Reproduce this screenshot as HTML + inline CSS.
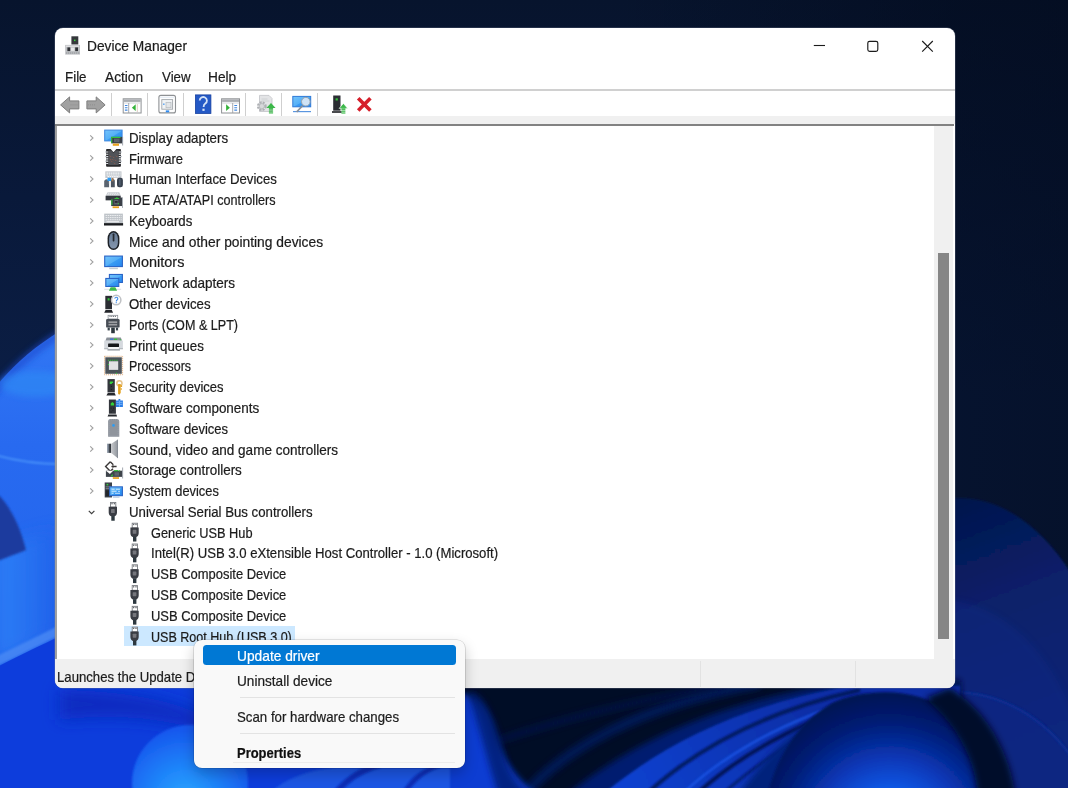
<!DOCTYPE html>
<html><head><meta charset="utf-8"><title>Device Manager</title>
<style>
html,body{margin:0;padding:0}
body{width:1068px;height:788px;overflow:hidden;position:relative;background:#06132c;font-family:"Liberation Sans",sans-serif;}
.abs,.t,.tb,svg.i{position:absolute}
.t,.tb{white-space:pre;font-size:14.5px;line-height:16px;height:16px;color:#1c1c1c;-webkit-text-stroke-width:0.22px;transform-origin:0 50%;display:block}
.tb{font-weight:bold;color:#101010}
#wall{position:absolute;left:0;top:0}
#win{position:absolute;left:54.5px;top:28px;width:900.5px;height:660px;background:#fff;border-radius:8px;overflow:hidden;box-shadow:0 0 0 0.5px rgba(120,130,150,.55)}
#win *{position:absolute}
</style></head><body>

<svg id="wall" width="1068" height="788" viewBox="0 0 1068 788">
<defs>
<linearGradient id="bg" x1="0" y1="0" x2="0" y2="788" gradientUnits="userSpaceOnUse"><stop offset="0" stop-color="#07142d"/><stop offset=".25" stop-color="#09193a"/><stop offset=".5" stop-color="#0b1e45"/><stop offset="1" stop-color="#0b1e45"/></linearGradient>
<linearGradient id="bgr" x1="620" y1="0" x2="1068" y2="0" gradientUnits="userSpaceOnUse"><stop offset="0" stop-color="#020a1c" stop-opacity="0"/><stop offset=".75" stop-color="#020a1c" stop-opacity=".55"/><stop offset="1" stop-color="#020a1c" stop-opacity=".62"/></linearGradient>
<linearGradient id="lp" x1="0" y1="330" x2="0" y2="788" gradientUnits="userSpaceOnUse">
<stop offset="0" stop-color="#3177f4"/><stop offset=".25" stop-color="#286af0"/><stop offset=".5" stop-color="#2467ee"/><stop offset=".72" stop-color="#1f5de9"/><stop offset=".82" stop-color="#0f3fdf"/><stop offset="1" stop-color="#0a36d6"/></linearGradient>
<radialGradient id="c1" gradientUnits="userSpaceOnUse" cx="185" cy="800" r="70">
<stop offset="0" stop-color="#2ba6ff"/><stop offset=".45" stop-color="#1f86fa"/><stop offset="1" stop-color="#1759ee"/></radialGradient>
<radialGradient id="s1" gradientUnits="userSpaceOnUse" cx="890" cy="835" r="152">
<stop offset="0" stop-color="#1672fa"/><stop offset=".3" stop-color="#0e58e6"/><stop offset=".5" stop-color="#0838b8"/><stop offset=".75" stop-color="#041c74"/><stop offset="1" stop-color="#030f48"/></radialGradient>
<linearGradient id="lp2" x1="0" y1="0" x2="60" y2="0" gradientUnits="userSpaceOnUse"><stop offset="0" stop-color="#2f82f8"/><stop offset=".6" stop-color="#2670f0"/><stop offset="1" stop-color="#1d5ee8" stop-opacity=".6"/></linearGradient>
<linearGradient id="rp" x1="955" y1="500" x2="1068" y2="788" gradientUnits="userSpaceOnUse">
<stop offset="0" stop-color="#05164c"/><stop offset=".35" stop-color="#08206a"/><stop offset="1" stop-color="#0a277c"/></linearGradient>
<linearGradient id="rib" x1="600" y1="788" x2="800" y2="688" gradientUnits="userSpaceOnUse">
<stop offset="0" stop-color="#0d43d4"/><stop offset="1" stop-color="#082ea6"/></linearGradient>
<filter id="b1" x="-20%" y="-20%" width="140%" height="140%"><feGaussianBlur stdDeviation="1.2"/></filter>
<filter id="b3" x="-20%" y="-20%" width="140%" height="140%"><feGaussianBlur stdDeviation="3"/></filter>
<filter id="b30" x="-50%" y="-50%" width="200%" height="200%"><feGaussianBlur stdDeviation="40"/></filter>
<filter id="b8" x="-30%" y="-30%" width="160%" height="160%"><feGaussianBlur stdDeviation="8"/></filter>
</defs>
<rect width="1068" height="788" fill="url(#bg)"/>
<rect width="1068" height="788" fill="url(#bgr)"/>
<!-- right petal -->
<path d="M940,500 C990,490 1040,520 1075,580 L1075,800 L940,800Z" fill="url(#rp)" filter="url(#b1)"/>
<path d="M940,600 C1000,600 1050,650 1075,720 L1075,800 L940,800Z" fill="#0b2c8c" opacity=".35" filter="url(#b3)"/>
<path d="M950,692 C1000,690 1045,715 1075,760 L1075,800 L1010,800 C1005,755 985,715 950,692Z" fill="#0a2782" opacity=".9" filter="url(#b1)"/>
<path d="M952,692 C1000,692 1045,717 1075,762" stroke="#0d3096" stroke-width="2" fill="none" filter="url(#b1)"/>
<!-- bottom dark zone -->
<path d="M455,680 L960,680 L960,700 C900,700 760,740 700,800 L455,800Z" fill="#020926" filter="url(#b3)"/>
<!-- faint ribbons in dark zone -->
<path d="M520,800 C560,750 640,705 760,684" stroke="#061c62" stroke-width="10" fill="none" filter="url(#b3)" opacity=".8"/>
<path d="M500,740 C560,720 640,700 720,686" stroke="#05164e" stroke-width="7" fill="none" filter="url(#b3)" opacity=".7"/>
<!-- ribbons mid -->
<path d="M560,800 C630,742 720,700 850,682 L960,682 L960,700 C880,700 800,722 740,800Z" fill="#061e70" filter="url(#b3)"/>
<path d="M596,800 C660,745 740,705 850,686 L960,686 L960,700 C880,700 800,722 740,800Z" fill="url(#rib)" filter="url(#b1)"/>
<path d="M640,800 C690,752 760,712 860,690" stroke="#041454" stroke-width="4" fill="none" filter="url(#b1)" opacity=".85"/>
<path d="M676,800 C716,760 780,720 872,695" stroke="#1a58ea" stroke-width="2.5" fill="none" filter="url(#b1)" opacity=".8"/>
<path d="M690,800 C728,764 788,724 880,698" stroke="#031048" stroke-width="4" fill="none" filter="url(#b1)" opacity=".85"/>
<path d="M716,800 C748,770 800,730 886,702" stroke="#04155c" stroke-width="3" fill="none" filter="url(#b1)" opacity=".7"/>
<path d="M735,800 C760,760 800,720 860,696 L900,700 L800,800Z" fill="#06237c" filter="url(#b3)"/>
<!-- big sphere bottom right -->
<path d="M766,800 C776,758 796,724 832,703 C868,687 920,688 948,712 C970,736 979,770 980,800Z" fill="url(#s1)" filter="url(#b1)"/>
<path d="M950,688 C990,712 1012,758 1016,800 L978,800 C976,765 962,730 925,698Z" fill="#020a2c" filter="url(#b3)"/>
<!-- left petal -->
<path d="M-10,394 C8,370 32,348 60,331 L60,800 L-10,800 Z" fill="url(#lp)"/>
<path d="M-10,397 C8,373 32,351 60,334" stroke="#1a46cc" stroke-width="7" fill="none" filter="url(#b3)" opacity=".7"/>
<ellipse cx="36" cy="384" rx="36" ry="13" fill="#2f8cf5" opacity=".6" filter="url(#b3)"/>
<path d="M-5,548 L60,528 L60,632 L-5,664Z" fill="url(#lp2)" filter="url(#b8)" opacity=".85"/>
<path d="M-5,492 C8,502 20,525 26,550 C16,554 5,558 -5,562Z" fill="#1c3a9e" filter="url(#b1)"/>
<path d="M-5,455 C20,462 40,464 60,464" stroke="#5aa6ff" stroke-width="1.6" fill="none" opacity=".8" filter="url(#b1)"/>
<path d="M-5,662 C20,650 40,640 60,630" stroke="#4d8cf5" stroke-width="9" fill="none" opacity=".75" filter="url(#b1)"/>
<!-- bottom-left flat blue -->
<path d="M-5,668 C20,655 40,646 60,636 L60,680 L450,680 L450,800 L-5,800Z" fill="#0d3ddc"/>
<path d="M60,690 C100,690 170,695 210,720 L200,730 C150,715 100,715 60,720Z" fill="#0a2cc0" filter="url(#b8)"/>
<circle cx="190" cy="783" r="58" fill="url(#c1)" filter="url(#b1)"/>
<!-- blue band right of context menu -->
<path d="M440,800 L440,690 C468,690 482,700 490,722 C500,760 520,785 545,800Z" fill="#0c3ed2" filter="url(#b3)"/>
<path d="M470,690 C490,700 498,730 506,760 C512,780 525,795 540,800 L500,800 C490,770 480,730 470,700Z" fill="#051a70" filter="url(#b3)" opacity=".8"/>
<!-- below context menu stripes -->
<path d="M262,800 C285,775 320,765 360,768 L450,768 L450,800Z" fill="#1a56e4" filter="url(#b1)"/>
<path d="M330,800 C345,780 360,770 380,765" stroke="#0a2fb8" stroke-width="6" fill="none" filter="url(#b1)"/>
<path d="M400,800 C410,782 420,772 440,765" stroke="#0a2fb8" stroke-width="5" fill="none" filter="url(#b1)"/>
</svg>

<div id="win">
<div style="left:0.00px;top:61.40px;width:901.00px;height:1.30px;background:#d0d0d0;"></div>
<div style="left:0.00px;top:88.30px;width:901.00px;height:8.00px;background:#f0f0f0;"></div>
<div style="left:0.00px;top:96.00px;width:899.00px;height:2.30px;background:#828282;"></div>
<div style="left:0.00px;top:98.20px;width:2.40px;height:533.00px;background:#a0a0a0;"></div>
<div style="left:879.70px;top:98.20px;width:19.30px;height:533.00px;background:#f0f0f0;"></div>
<div style="left:883.50px;top:225.30px;width:10.80px;height:386.00px;background:#868686;"></div>
<div style="left:0.00px;top:631.20px;width:901.00px;height:30.00px;background:#f0f0f0;"></div>
<div style="left:645.80px;top:633.00px;width:1.00px;height:26.00px;background:#e2e2e2;"></div>
<div style="left:800.00px;top:633.00px;width:1.00px;height:26.00px;background:#e2e2e2;"></div>
<div style="left:56.30px;top:64.50px;width:1.00px;height:23.30px;background:#cfcfcf;"></div>
<div style="left:92.30px;top:64.50px;width:1.00px;height:23.30px;background:#cfcfcf;"></div>
<div style="left:128.40px;top:64.50px;width:1.00px;height:23.30px;background:#cfcfcf;"></div>
<div style="left:190.30px;top:64.50px;width:1.00px;height:23.30px;background:#cfcfcf;"></div>
<div style="left:226.50px;top:64.50px;width:1.00px;height:23.30px;background:#cfcfcf;"></div>
<div style="left:262.30px;top:64.50px;width:1.00px;height:23.30px;background:#cfcfcf;"></div>
<div style="left:69.25px;top:597.60px;width:170.90px;height:20.80px;background:#cce8ff;"></div>
</div>
<span class="t" style="left:86.50px;top:38.10px;transform:scaleX(0.9477);">Device Manager</span>
<span class="t" style="left:65.10px;top:68.90px;transform:scaleX(0.9213);">File</span>
<span class="t" style="left:105.30px;top:68.90px;transform:scaleX(0.9439);">Action</span>
<span class="t" style="left:161.80px;top:68.90px;transform:scaleX(0.9184);">View</span>
<span class="t" style="left:207.50px;top:68.90px;transform:scaleX(0.9438);">Help</span>
<svg class="i" style="left:810px;top:36px" width="130" height="20" viewBox="0 0 130 20"><path d="M3.8 9.5H15" stroke="#1b1b1b" stroke-width="1.1" fill="none"/><rect x="57.8" y="5.3" width="10" height="10" rx="1.8" stroke="#1b1b1b" stroke-width="1.15" fill="none"/><path d="M112.2 5 L122.8 15.6 M122.8 5 L112.2 15.6" stroke="#1b1b1b" stroke-width="1.15" fill="none"/></svg>
<span class="t" style="left:128.65px;top:129.80px;transform:scaleX(0.9173);">Display adapters</span>
<svg class="i" style="left:88px;top:132.50px" width="8" height="10" viewBox="0 0 8 10"><path d="M2.2 2.3 L5 5 L2.2 7.7" stroke="#a0a0a0" stroke-width="1.1" fill="none"/></svg>
<span class="t" style="left:128.65px;top:150.58px;transform:scaleX(0.8945);">Firmware</span>
<svg class="i" style="left:88px;top:153.28px" width="8" height="10" viewBox="0 0 8 10"><path d="M2.2 2.3 L5 5 L2.2 7.7" stroke="#a0a0a0" stroke-width="1.1" fill="none"/></svg>
<span class="t" style="left:128.65px;top:171.36px;transform:scaleX(0.9080);">Human Interface Devices</span>
<svg class="i" style="left:88px;top:174.06px" width="8" height="10" viewBox="0 0 8 10"><path d="M2.2 2.3 L5 5 L2.2 7.7" stroke="#a0a0a0" stroke-width="1.1" fill="none"/></svg>
<span class="t" style="left:128.65px;top:192.14px;transform:scaleX(0.8715);">IDE ATA/ATAPI controllers</span>
<svg class="i" style="left:88px;top:194.84px" width="8" height="10" viewBox="0 0 8 10"><path d="M2.2 2.3 L5 5 L2.2 7.7" stroke="#a0a0a0" stroke-width="1.1" fill="none"/></svg>
<span class="t" style="left:128.65px;top:212.92px;transform:scaleX(0.9134);">Keyboards</span>
<svg class="i" style="left:88px;top:215.62px" width="8" height="10" viewBox="0 0 8 10"><path d="M2.2 2.3 L5 5 L2.2 7.7" stroke="#a0a0a0" stroke-width="1.1" fill="none"/></svg>
<span class="t" style="left:128.65px;top:233.70px;transform:scaleX(0.9518);">Mice and other pointing devices</span>
<svg class="i" style="left:88px;top:236.40px" width="8" height="10" viewBox="0 0 8 10"><path d="M2.2 2.3 L5 5 L2.2 7.7" stroke="#a0a0a0" stroke-width="1.1" fill="none"/></svg>
<span class="t" style="left:128.65px;top:254.48px;transform:scaleX(0.9963);">Monitors</span>
<svg class="i" style="left:88px;top:257.18px" width="8" height="10" viewBox="0 0 8 10"><path d="M2.2 2.3 L5 5 L2.2 7.7" stroke="#a0a0a0" stroke-width="1.1" fill="none"/></svg>
<span class="t" style="left:128.65px;top:275.26px;transform:scaleX(0.9336);">Network adapters</span>
<svg class="i" style="left:88px;top:277.96px" width="8" height="10" viewBox="0 0 8 10"><path d="M2.2 2.3 L5 5 L2.2 7.7" stroke="#a0a0a0" stroke-width="1.1" fill="none"/></svg>
<span class="t" style="left:128.65px;top:296.04px;transform:scaleX(0.9118);">Other devices</span>
<svg class="i" style="left:88px;top:298.74px" width="8" height="10" viewBox="0 0 8 10"><path d="M2.2 2.3 L5 5 L2.2 7.7" stroke="#a0a0a0" stroke-width="1.1" fill="none"/></svg>
<span class="t" style="left:128.65px;top:316.82px;transform:scaleX(0.8674);">Ports (COM &amp; LPT)</span>
<svg class="i" style="left:88px;top:319.52px" width="8" height="10" viewBox="0 0 8 10"><path d="M2.2 2.3 L5 5 L2.2 7.7" stroke="#a0a0a0" stroke-width="1.1" fill="none"/></svg>
<span class="t" style="left:128.65px;top:337.60px;transform:scaleX(0.9191);">Print queues</span>
<svg class="i" style="left:88px;top:340.30px" width="8" height="10" viewBox="0 0 8 10"><path d="M2.2 2.3 L5 5 L2.2 7.7" stroke="#a0a0a0" stroke-width="1.1" fill="none"/></svg>
<span class="t" style="left:128.65px;top:358.38px;transform:scaleX(0.8551);">Processors</span>
<svg class="i" style="left:88px;top:361.08px" width="8" height="10" viewBox="0 0 8 10"><path d="M2.2 2.3 L5 5 L2.2 7.7" stroke="#a0a0a0" stroke-width="1.1" fill="none"/></svg>
<span class="t" style="left:128.65px;top:379.16px;transform:scaleX(0.8956);">Security devices</span>
<svg class="i" style="left:88px;top:381.86px" width="8" height="10" viewBox="0 0 8 10"><path d="M2.2 2.3 L5 5 L2.2 7.7" stroke="#a0a0a0" stroke-width="1.1" fill="none"/></svg>
<span class="t" style="left:128.65px;top:399.94px;transform:scaleX(0.9294);">Software components</span>
<svg class="i" style="left:88px;top:402.64px" width="8" height="10" viewBox="0 0 8 10"><path d="M2.2 2.3 L5 5 L2.2 7.7" stroke="#a0a0a0" stroke-width="1.1" fill="none"/></svg>
<span class="t" style="left:128.65px;top:420.72px;transform:scaleX(0.8971);">Software devices</span>
<svg class="i" style="left:88px;top:423.42px" width="8" height="10" viewBox="0 0 8 10"><path d="M2.2 2.3 L5 5 L2.2 7.7" stroke="#a0a0a0" stroke-width="1.1" fill="none"/></svg>
<span class="t" style="left:128.65px;top:441.50px;transform:scaleX(0.9331);">Sound, video and game controllers</span>
<svg class="i" style="left:88px;top:444.20px" width="8" height="10" viewBox="0 0 8 10"><path d="M2.2 2.3 L5 5 L2.2 7.7" stroke="#a0a0a0" stroke-width="1.1" fill="none"/></svg>
<span class="t" style="left:128.65px;top:462.28px;transform:scaleX(0.9271);">Storage controllers</span>
<svg class="i" style="left:88px;top:464.98px" width="8" height="10" viewBox="0 0 8 10"><path d="M2.2 2.3 L5 5 L2.2 7.7" stroke="#a0a0a0" stroke-width="1.1" fill="none"/></svg>
<span class="t" style="left:128.65px;top:483.06px;transform:scaleX(0.8843);">System devices</span>
<svg class="i" style="left:88px;top:485.76px" width="8" height="10" viewBox="0 0 8 10"><path d="M2.2 2.3 L5 5 L2.2 7.7" stroke="#a0a0a0" stroke-width="1.1" fill="none"/></svg>
<span class="t" style="left:128.65px;top:503.84px;transform:scaleX(0.9111);">Universal Serial Bus controllers</span>
<svg class="i" style="left:86px;top:506.54px" width="12" height="10" viewBox="0 0 12 10"><path d="M2.8 3.8 L5.6 6.6 L8.4 3.8" stroke="#404040" stroke-width="1.2" fill="none"/></svg>
<span class="t" style="left:150.85px;top:524.62px;transform:scaleX(0.8810);">Generic USB Hub</span>
<span class="t" style="left:150.85px;top:545.40px;transform:scaleX(0.9048);">Intel(R) USB 3.0 eXtensible Host Controller - 1.0 (Microsoft)</span>
<span class="t" style="left:150.85px;top:566.18px;transform:scaleX(0.8931);">USB Composite Device</span>
<span class="t" style="left:150.85px;top:586.96px;transform:scaleX(0.8931);">USB Composite Device</span>
<span class="t" style="left:150.85px;top:607.74px;transform:scaleX(0.8931);">USB Composite Device</span>
<span class="t" style="left:150.85px;top:628.52px;transform:scaleX(0.8648);">USB Root Hub (USB 3.0)</span>
<div class="abs" style="left:55px;top:660px;width:139px;height:28px;overflow:hidden"><span class="t" style="left:1.7px;top:8.55px;transform:scaleX(0.908)">Launches the Update Driver</span></div>
<svg class="i" style="left:0;top:0" width="1068" height="788" viewBox="0 0 1068 788">
<defs><linearGradient id="mg" x1="0" y1="0" x2="1" y2="1"><stop offset="0" stop-color="#74c4fb"/><stop offset=".5" stop-color="#56b0f7"/><stop offset=".55" stop-color="#399bf3"/><stop offset="1" stop-color="#2585ee"/></linearGradient><linearGradient id="mo" x1="0" y1="0" x2="0" y2="1"><stop offset="0" stop-color="#667a94"/><stop offset="1" stop-color="#8496ae"/></linearGradient><linearGradient id="sp" x1="0" y1="0" x2="1" y2="0"><stop offset="0" stop-color="#c9cbce"/><stop offset="1" stop-color="#90959c"/></linearGradient></defs>
<g transform="translate(103 127.00)"><rect x="1.7" y="3.1" width="17.4" height="10.8" fill="url(#mg)" stroke="#3b86de" stroke-width="1"/><rect x="8.2" y="9.9" width="11.2" height="6.5" fill="#3b4048"/><path d="M8.7 16V10.4H17.5" stroke="#34c23a" stroke-width="1.1" fill="none"/><rect x="11" y="11.6" width="5.5" height="3.6" fill="#5d636d"/><rect x="19.2" y="9.9" width=".9" height="8.6" fill="#9aa0a8"/><rect x="9.8" y="16.6" width="6.2" height="2.2" fill="#e9a21f"/></g>
<g transform="translate(103 147.78)"><rect x="3.1" y="1.1" width="14.8" height="17.9" rx=".8" fill="#29292b"/><path d="M3.1 4.2h2.4M3.1 6.5h2.4M3.1 8.8h2.4M3.1 11.1h2.4M3.1 13.4h2.4M3.1 15.7h2.4M15.5 4.2h2.4M15.5 6.5h2.4M15.5 8.8h2.4M15.5 11.1h2.4M15.5 13.4h2.4M15.5 15.7h2.4" stroke="#dfe3e8" stroke-width="1.15"/><path d="M2.4 4.2h.8M2.4 8.8h.8M2.4 13.4h.8M17.8 4.2h.8M17.8 8.8h.8M17.8 13.4h.8" stroke="#9aa4b0" stroke-width="1"/><path d="M5.4 2.8H8.2L10.5 5.4 12.8 2.8h2.8V17.3H5.4z" fill="#515358"/><path d="M7.4 1L10.5 4.4 13.6 1z" fill="#fff"/><path d="M7 8l1 1M10 9l1 1M12 12l1 1M8 13l1 1M11 15l1 1M13 8l1 1M7 11l1 1M9.5 11.5l1 1" stroke="#a4604a" stroke-width=".9"/></g>
<g transform="translate(103 168.56)"><rect x="2.3" y="2.8" width="16.2" height="6.6" fill="#c3c8ce"/><path d="M3.5 4.6h14M3.5 6.4h14M4.5 8.1h12" stroke="#f4f6f8" stroke-width="1.1" stroke-dasharray="1.6 .6"/><path d="M1.2 12.5a2.6 2.6 0 0 1 4.9 0V18.6H1.2z" fill="#5a6470"/><path d="M7.9 12a2 2 0 0 1 3.9 0V18.6H7.9z" fill="#4d5560"/><rect x="14" y="9.3" width="5.9" height="9.4" rx="2.2" fill="#39424f"/><rect x="16.2" y="10.5" width="1.3" height="6.5" fill="#566477"/><rect x="4.5" y="9.2" width="3.7" height="3.3" fill="#2a9cf5"/><rect x="8.5" y="9.4" width="2" height="3.4" fill="#a57b55"/><rect x="5.9" y="12.5" width="1" height="3" fill="#e8eaee"/></g>
<g transform="translate(103 189.34)"><path d="M4.6 2.8h11.6l1.6 3.6H2.8z" fill="#c6cacf"/><path d="M5 4h10.5M4.4 5.3h11.8" stroke="#eef0f2" stroke-width=".8" stroke-dasharray="1.4 .8"/><rect x="2.6" y="6.4" width="15.1" height="4.6" fill="#34383f"/><rect x="8.2" y="8.2" width="11" height="8.5" fill="#3b4048"/><path d="M8.9 15.6V9.8" stroke="#34c23a" stroke-width="1.1"/><path d="M11.5 9.2h4.6M13 8.6h1.8" stroke="#34c23a" stroke-width="1"/><rect x="14.6" y="13.6" width="1.4" height="1.4" fill="#34c23a"/><rect x="11.2" y="10.6" width="4" height="4.5" fill="#5d636d"/><rect x="11.8" y="11.8" width="2.8" height="1.6" fill="#22252a"/><rect x="19.2" y="8" width=".8" height="10.6" fill="#9aa0a8"/><rect x="9.6" y="17" width="6.4" height="1.8" fill="#e9a21f"/></g>
<g transform="translate(103 210.12)"><rect x="1.2" y="3.5" width="18.7" height="9.6" fill="#bfc4c9"/><path d="M2.6 5.4h16M2.6 7.5h16M2.6 9.6h16" stroke="#eceef0" stroke-width="1" stroke-dasharray="1.5 .7"/><path d="M3.5 11.6h12.5" stroke="#f2f3f5" stroke-width="1"/><rect x="1" y="13" width="19.1" height="2.4" fill="#1b1d21"/></g>
<g transform="translate(103 230.90)"><rect x="4.6" y=".2" width="11.8" height="19" rx="5.9" ry="7.2" fill="#1d2127"/><rect x="6.1" y="1.7" width="8.8" height="16" rx="4.4" ry="5.8" fill="url(#mo)"/><rect x="9.7" y="2.6" width="1.7" height="8" rx=".7" fill="#24282f"/></g>
<g transform="translate(103 251.68)"><rect x="1.7" y="4.4" width="17.7" height="10.5" fill="url(#mg)" stroke="#2a64c6" stroke-width="1.1"/><rect x="6.2" y="15.9" width="8.7" height="1.6" fill="#c3cbd4"/></g>
<g transform="translate(103 272.46)"><rect x="6.4" y="2" width="13" height="8" fill="url(#mg)" stroke="#2a64c6" stroke-width="1.1"/><rect x="2.8" y="6" width="13" height="8" fill="url(#mg)" stroke="#2a64c6" stroke-width="1.1"/><rect x="1.2" y="16.3" width="17" height="1.1" fill="#dfe3e6"/><path d="M7.6 14.7h4.8l1.7 3.6H5.9z" fill="#3dbb4b"/></g>
<g transform="translate(103 293.24)"><rect x="2.3" y="2.6" width="6.7" height="13.4" fill="#2b2d33"/><rect x="4.6" y="5" width="2" height="2.2" fill="#34c23a"/><path d="M2.6 16.7h6.2l1.3 2.7H1.2z" fill="#24262b"/><circle cx="13.2" cy="6.8" r="4.7" fill="#fff" stroke="#bfc1c4" stroke-width="1.5"/><path d="M11.8 5.4a1.5 1.5 0 1 1 2.2 1.4c-.6.4-.7.7-.7 1.4" stroke="#3f8ae6" stroke-width="1.1" fill="none"/><rect x="12.7" y="8.9" width="1.1" height="1.1" fill="#3f8ae6"/></g>
<g transform="translate(103 314.02)"><rect x="5.1" y="1.3" width="9.6" height="3.6" fill="#fff" stroke="#8c9198" stroke-width=".8"/><path d="M6.5 2.4h7" stroke="#5c6168" stroke-width="1" stroke-dasharray="1 .8"/><rect x="3.1" y="5" width="13.5" height="8.6" rx="1.2" fill="#474d55"/><rect x="5.5" y="7.3" width="8.7" height="1.7" fill="#9c9ea2"/><rect x="5.5" y="9.8" width="8.7" height="1.7" fill="#9c9ea2"/><rect x="4.6" y="13.6" width="2.2" height="2.8" fill="#3a444c"/><rect x="12.9" y="13.6" width="2.2" height="2.8" fill="#3a444c"/><rect x="8.2" y="13.6" width="3.6" height="5.6" fill="#2c363d"/></g>
<g transform="translate(103 334.80)"><path d="M3.6 2.7h14.2l1.2 3.2H2.4z" fill="#8a9098"/><rect x="7" y="3.6" width="3.6" height="1.6" fill="#4a78c8"/><rect x="11" y="3.8" width="3.2" height="1.4" fill="#34c23a"/><rect x="16.6" y="4.6" width="1.6" height="1" fill="#34c23a"/><rect x="1.2" y="5.8" width="18.7" height="8.6" fill="#d5d9de"/><rect x="1.2" y="13.4" width="18.7" height="1" fill="#aeb3b9"/><rect x="5.1" y="8.7" width="10.9" height="3.6" rx=".6" fill="#15171a"/><rect x="5.3" y="12.2" width="10.6" height="2.2" fill="#f4f5f6"/><rect x="4.5" y="14.3" width="12.4" height="1.5" fill="#9da2a8"/></g>
<g transform="translate(103 355.58)"><rect x="1.5" y=".7" width="18.1" height="18.5" fill="none" stroke="#dba878" stroke-width="1" stroke-dasharray="1.1 .9"/><rect x="2.3" y="1.7" width="16.5" height="16.5" fill="#4a5258"/><rect x="5.9" y="5.7" width="9.3" height="8.6" fill="#e2e3e4"/><path d="M5 4.6h10" stroke="#34d23a" stroke-width="1.1" stroke-dasharray="1.1 1"/><rect x="5" y="8.4" width="1.1" height="1.1" fill="#34d23a"/><rect x="12.8" y="17.2" width="1.2" height="1" fill="#34d23a"/></g>
<g transform="translate(103 376.36)"><rect x="4.5" y="2.7" width="7.3" height="13.4" fill="#33363c"/><path d="M6.8 5.2h3.3v1.4h-1.2v1.1H6.8z" fill="#34d23a"/><rect x="7.9" y="9.5" width="1.1" height="1.1" fill="#1e2024"/><rect x="7.9" y="12.6" width="1.1" height="1.1" fill="#1e2024"/><path d="M4.8 16.7h6.8l1.2 2.5H3.4z" fill="#26282d"/><circle cx="16.4" cy="6.9" r="2.6" fill="none" stroke="#e6c48c" stroke-width="1.5"/><path d="M15.1 7.6h2.6v8.6l-.9 1.9h-1.1l-.6-1.2z" fill="#e2a11e"/><path d="M17.7 9h1.4v1.6h-1.4zM17.7 12h1.1v1.3h-1.1z" fill="#e2a11e"/></g>
<g transform="translate(103 397.14)"><rect x="5.9" y="2.4" width="7" height="14.2" fill="#33363c"/><path d="M9.4 4.9l1.7 1.5v1.9H7.7V6.4z" fill="#34d23a"/><rect x="7.6" y="10.6" width="1" height="1" fill="#1e2024"/><rect x="10" y="10.6" width="1" height="1" fill="#1e2024"/><rect x="9.4" y="12.6" width="1" height="1" fill="#1e2024"/><rect x="7.6" y="14.4" width="1" height="1" fill="#1e2024"/><path d="M5.4 17.4h8l.7 2H4.6z" fill="#26282d"/><path d="M12.9 3.4h2.6v-1.6h1.8v1.6h2.6v6.4h-7z" fill="#2a7de8"/><path d="M13.4 5.2h2.4M17 5.2h2.4M13.4 7.2h2.4M17 7.2h2.4M16.4 3.4v6.2" stroke="#8ec0f8" stroke-width=".8" fill="none"/></g>
<g transform="translate(103 417.92)"><path d="M5.1 3.6a2.6 2.6 0 0 1 2.6-2.6h6a2.6 2.6 0 0 1 2.6 2.6V18.9H5.1z" fill="#8f949c"/><rect x="6.2" y="1.8" width="9" height="16.3" fill="none" stroke="#a4abb6" stroke-width=".8" stroke-dasharray=".9 1.1"/><circle cx="10.5" cy="7.5" r="1.3" fill="#2a9cf5"/></g>
<g transform="translate(103 438.70)"><path d="M7.9 5.3L14.9.7v18.9L7.9 14.1z" fill="url(#sp)"/><path d="M14.2 1.3l.7-.6v18.9l-.7-.5z" fill="#7d858f"/><rect x="4.3" y="5.1" width="3.6" height="9" fill="#5a626c"/><rect x="6.4" y="5.1" width="1.5" height="9" fill="#2d3138"/><rect x="4.3" y="5.1" width="1.1" height="9" fill="#9aa6b6"/></g>
<g transform="translate(103 459.48)"><path d="M7.3 2.2L2.6 7l4.7 4.8L10 9.2M7.3 2.2l3 3" stroke="#3b3838" stroke-width="1.4" fill="none"/><path d="M8.6 7h5" stroke="#3b3838" stroke-width="1.5"/><path d="M10.4 5.2L8.4 7l2 1.8z" fill="#3b3838"/><rect x="2.9" y="11.2" width="16.4" height="6.2" fill="#3e434b"/><path d="M2.9 11.2l4 3.4 3.3-3.4z" fill="#fff"/><rect x="11" y="10.6" width="4.2" height="1.2" fill="#34c23a"/><rect x="15.8" y="10.8" width="1.3" height="1.2" fill="#34c23a"/><path d="M8.2 17l1.6-1.8" stroke="#34c23a" stroke-width="1.1"/><rect x="11.5" y="12.8" width="4.5" height="3.4" fill="#5d636d"/><rect x="19.2" y="8" width=".9" height="11" fill="#9aa0a8"/><rect x="9.8" y="17.7" width="6.2" height="1.7" fill="#e9a21f"/></g>
<g transform="translate(103 480.26)"><rect x="1.7" y="2.2" width="7.3" height="15" fill="#3c4149"/><rect x="3.6" y="3.6" width="1.6" height="1.5" fill="#34d23a"/><path d="M2.6 6.6h5.5M2.6 8.4h5.5" stroke="#8c929b" stroke-width=".8"/><rect x="2.6" y="10" width="3.4" height="6" fill="#23262b"/><rect x="6.7" y="6.6" width="12.7" height="8.8" fill="url(#mg)" stroke="#2a64c6" stroke-width="1.1"/><path d="M8.6 9h3M13 9h4M8.6 11h5M15 11h2M8.6 13h2M12 13h5" stroke="#d8ecfd" stroke-width=".9"/><rect x="10" y="16.2" width="6.5" height="1.3" fill="#b7cbe2"/></g>
<g transform="translate(103 501.04)"><rect x="7.5" y="1.4" width="5.3" height="4.7" fill="#fff" stroke="#7a7d82" stroke-width=".9"/><rect x="8.4" y="2" width="1.2" height="1.3" fill="#54585e"/><rect x="10.7" y="2" width="1.2" height="1.3" fill="#54585e"/><path d="M5.7 5.8h8.3v5.6c0 1.9-1 3.3-2.4 3.9H8.1c-1.4-.6-2.4-2-2.4-3.9z" fill="#3a3d44"/><rect x="8" y="8" width="3.7" height="4" rx=".6" fill="#75767c"/><rect x="8.3" y="15" width="3.4" height="4.7" fill="#2d383f"/></g>
<g transform="translate(124.7 521.82)"><rect x="7.5" y="1.4" width="5.3" height="4.7" fill="#fff" stroke="#7a7d82" stroke-width=".9"/><rect x="8.4" y="2" width="1.2" height="1.3" fill="#54585e"/><rect x="10.7" y="2" width="1.2" height="1.3" fill="#54585e"/><path d="M5.7 5.8h8.3v5.6c0 1.9-1 3.3-2.4 3.9H8.1c-1.4-.6-2.4-2-2.4-3.9z" fill="#3a3d44"/><rect x="8" y="8" width="3.7" height="4" rx=".6" fill="#75767c"/><rect x="8.3" y="15" width="3.4" height="4.7" fill="#2d383f"/></g>
<g transform="translate(124.7 542.60)"><rect x="7.5" y="1.4" width="5.3" height="4.7" fill="#fff" stroke="#7a7d82" stroke-width=".9"/><rect x="8.4" y="2" width="1.2" height="1.3" fill="#54585e"/><rect x="10.7" y="2" width="1.2" height="1.3" fill="#54585e"/><path d="M5.7 5.8h8.3v5.6c0 1.9-1 3.3-2.4 3.9H8.1c-1.4-.6-2.4-2-2.4-3.9z" fill="#3a3d44"/><rect x="8" y="8" width="3.7" height="4" rx=".6" fill="#75767c"/><rect x="8.3" y="15" width="3.4" height="4.7" fill="#2d383f"/></g>
<g transform="translate(124.7 563.38)"><rect x="7.5" y="1.4" width="5.3" height="4.7" fill="#fff" stroke="#7a7d82" stroke-width=".9"/><rect x="8.4" y="2" width="1.2" height="1.3" fill="#54585e"/><rect x="10.7" y="2" width="1.2" height="1.3" fill="#54585e"/><path d="M5.7 5.8h8.3v5.6c0 1.9-1 3.3-2.4 3.9H8.1c-1.4-.6-2.4-2-2.4-3.9z" fill="#3a3d44"/><rect x="8" y="8" width="3.7" height="4" rx=".6" fill="#75767c"/><rect x="8.3" y="15" width="3.4" height="4.7" fill="#2d383f"/></g>
<g transform="translate(124.7 584.16)"><rect x="7.5" y="1.4" width="5.3" height="4.7" fill="#fff" stroke="#7a7d82" stroke-width=".9"/><rect x="8.4" y="2" width="1.2" height="1.3" fill="#54585e"/><rect x="10.7" y="2" width="1.2" height="1.3" fill="#54585e"/><path d="M5.7 5.8h8.3v5.6c0 1.9-1 3.3-2.4 3.9H8.1c-1.4-.6-2.4-2-2.4-3.9z" fill="#3a3d44"/><rect x="8" y="8" width="3.7" height="4" rx=".6" fill="#75767c"/><rect x="8.3" y="15" width="3.4" height="4.7" fill="#2d383f"/></g>
<g transform="translate(124.7 604.94)"><rect x="7.5" y="1.4" width="5.3" height="4.7" fill="#fff" stroke="#7a7d82" stroke-width=".9"/><rect x="8.4" y="2" width="1.2" height="1.3" fill="#54585e"/><rect x="10.7" y="2" width="1.2" height="1.3" fill="#54585e"/><path d="M5.7 5.8h8.3v5.6c0 1.9-1 3.3-2.4 3.9H8.1c-1.4-.6-2.4-2-2.4-3.9z" fill="#3a3d44"/><rect x="8" y="8" width="3.7" height="4" rx=".6" fill="#75767c"/><rect x="8.3" y="15" width="3.4" height="4.7" fill="#2d383f"/></g>
<g transform="translate(124.7 625.72)"><rect x="7.5" y="1.4" width="5.3" height="4.7" fill="#fff" stroke="#7a7d82" stroke-width=".9"/><rect x="8.4" y="2" width="1.2" height="1.3" fill="#54585e"/><rect x="10.7" y="2" width="1.2" height="1.3" fill="#54585e"/><path d="M5.7 5.8h8.3v5.6c0 1.9-1 3.3-2.4 3.9H8.1c-1.4-.6-2.4-2-2.4-3.9z" fill="#3a3d44"/><rect x="8" y="8" width="3.7" height="4" rx=".6" fill="#75767c"/><rect x="8.3" y="15" width="3.4" height="4.7" fill="#2d383f"/></g>
<path d="M60.6 104.9L69.6 96.9V100.9H78.9V108.9H69.6V112.9z" fill="#a1a1a1" stroke="#7d7d7d" stroke-width="1" stroke-linejoin="round"/><path d="M105.1 104.9L96.2 96.9V100.9H86.9V108.9H96.2V112.9z" fill="#a1a1a1" stroke="#7d7d7d" stroke-width="1" stroke-linejoin="round"/><path d="M70.5 104.9h7M88 104.9h7" stroke="#8e8e8e" stroke-width="1" stroke-dasharray="1 1"/><rect x="123.2" y="98.8" width="17.9" height="14.2" fill="#fff" stroke="#8e9194" stroke-width="1"/><rect x="123.7" y="99.3" width="16.9" height="2.6" fill="#a9acb0"/><path d="M123.7 103h17" stroke="#c9ccd0" stroke-width=".8"/><path d="M128.7 103v10" stroke="#9ea1a5" stroke-width=".9"/><path d="M124.9 105.5h2.6M124.9 107.8h2.6M124.9 110.1h2.6" stroke="#3f86e0" stroke-width="1.1"/><path d="M135.7 104.3v6.8l-3.8-3.4z" fill="#34b23a"/><path d="M137.3 104v8" stroke="#d9c9b8" stroke-width=".9"/><rect x="221.6" y="98.8" width="17.9" height="14.2" fill="#fff" stroke="#8e9194" stroke-width="1"/><rect x="222.1" y="99.3" width="16.9" height="2.6" fill="#a9acb0"/><path d="M222.1 103h17" stroke="#c9ccd0" stroke-width=".8"/><path d="M232.7 103v10" stroke="#9ea1a5" stroke-width=".9"/><path d="M234.29999999999998 105.5h2.8M234.29999999999998 107.8h2.8M234.29999999999998 110.1h2.8" stroke="#3f86e0" stroke-width="1.1"/><path d="M226.1 104.3v6.8l3.8-3.4z" fill="#34b23a"/><rect x="158.9" y="95.4" width="16.6" height="17.5" rx="2" fill="#fdfdfd" stroke="#8e9194" stroke-width="1.1"/><path d="M160.5 97.3h13" stroke="#c5d6ea" stroke-width="1" stroke-dasharray="1 1"/><rect x="161.8" y="99.6" width="10.8" height="9.6" fill="#f2f4f6" stroke="#a2a6ab" stroke-width=".9"/><rect x="166" y="102.3" width="5" height="5.4" fill="#e4e6e9" stroke="#b3b7bc" stroke-width=".7"/><rect x="163" y="103.5" width="1.6" height="1.4" fill="#5aa4f2"/><rect x="165.8" y="110.4" width="3.4" height="1.9" fill="#2f8bf0"/><rect x="195.5" y="94.9" width="15.4" height="18.5" fill="#2459c6"/><rect x="195.5" y="94.9" width="15.4" height="18.5" fill="none" stroke="#153f9e" stroke-width=".8"/><path d="M199.7 100.6a3.6 3.6 0 1 1 5.6 3c-1.3.9-1.7 1.6-1.7 3.4" stroke="#d3e2f7" stroke-width="1.8" fill="none"/><rect x="202.4" y="108.7" width="2.2" height="2.2" fill="#d3e2f7"/><path d="M259.5 95.4h9.5l3 3V111.5h-12.5z" fill="#e3e4e6" stroke="#c1c3c6" stroke-width=".8"/><path d="M261.5 99h6M261.5 101h8" stroke="#c9cbce" stroke-width=".8"/><circle cx="261.8" cy="106.2" r="3.6" fill="none" stroke="#aeb0b4" stroke-width="2.6" stroke-dasharray="1.9 1"/><circle cx="261.8" cy="106.2" r="2.6" fill="#d7d8da" stroke="#b5b7ba" stroke-width=".8"/><path d="M271 102.9l4.6 5.2h-9.2z" fill="#3cb84a"/><rect x="268.9" y="108.1" width="4.2" height="1.6" fill="#3cb84a"/><rect x="268.9" y="110.4" width="4.2" height="1.3" fill="#3cb84a"/><rect x="268.9" y="112.3" width="4.2" height="1.2" fill="#3cb84a"/><rect x="292.8" y="96.4" width="17.9" height="10.4" fill="url(#mg)" stroke="#2f7ad8" stroke-width="1"/><path d="M293 111.6h18" stroke="#5a96e0" stroke-width="1.2"/><path d="M302.6 105.6l-6 6.4" stroke="#8a9099" stroke-width="1.7"/><circle cx="305.8" cy="101.7" r="4.3" fill="#cfe3f6" stroke="#9aa3ad" stroke-width="1"/><rect x="333.2" y="95.5" width="7.3" height="15.2" fill="#2b2d33"/><rect x="335.6" y="98.3" width="2.2" height="2.2" fill="#34c23a"/><rect x="332" y="111.2" width="9.6" height="1.6" fill="#1e2024"/><path d="M343.4 103.4l4.3 5h-8.6z" fill="#3cb84a" stroke="#fff" stroke-width=".6"/><rect x="341.4" y="108.3" width="4" height="1.6" fill="#3cb84a"/><rect x="341.4" y="110.5" width="4" height="1.3" fill="#3cb84a"/><rect x="341.4" y="112.4" width="4" height="1.2" fill="#3cb84a"/><path d="M358.2 98.2l12.2 12.4M370.4 98.2l-12.2 12.4" stroke="#d61f2b" stroke-width="3.6" fill="none"/>
<rect x="71.4" y="36.3" width="6.9" height="8.2" fill="#36383c"/><rect x="74" y="39.6" width="1.5" height="1.5" fill="#34d23a"/><rect x="65.2" y="44.9" width="14.8" height="9.7" fill="#bdbfc2"/><rect x="66" y="45.6" width="13.2" height="1.2" fill="#e6e7e8"/><rect x="67.4" y="47.4" width="2.8" height="3.7" fill="#2f3135"/><rect x="75.2" y="47.4" width="2.8" height="3.7" fill="#2f3135"/><rect x="71" y="47.6" width="3.4" height="3.2" fill="#e9eaeb"/><path d="M66 53h13.4" stroke="#8f9296" stroke-width="1.1" stroke-dasharray="1.3 .7"/>
</svg>
<div class="abs" style="left:194px;top:639.5px;width:271px;height:128px;border-radius:8px;background:#f9f9f9;box-shadow:0 0 0 0.6px rgba(0,0,0,.18),0 6px 14px rgba(0,0,0,.22)"></div>
<div class="abs" style="left:202.5px;top:645px;width:253.3px;height:20.3px;border-radius:3.5px;background:#0078d4"></div>
<div class="abs" style="left:239.5px;top:696.5px;width:215.5px;height:1px;background:#e3e3e3"></div>
<div class="abs" style="left:239.5px;top:732.8px;width:215.5px;height:1px;background:#e3e3e3"></div>
<div class="abs" style="left:233px;top:762.3px;width:222px;height:1.2px;background:#ececec"></div>
<span class="t" style="left:236.60px;top:648.10px;transform:scaleX(0.9484);color:#fff">Update driver</span>
<span class="t" style="left:236.60px;top:673.10px;transform:scaleX(0.9388);">Uninstall device</span>
<span class="t" style="left:236.60px;top:709.00px;transform:scaleX(0.9142);">Scan for hardware changes</span>
<span class="tb" style="left:236.60px;top:744.80px;transform:scaleX(0.8938);">Properties</span>
</body></html>
